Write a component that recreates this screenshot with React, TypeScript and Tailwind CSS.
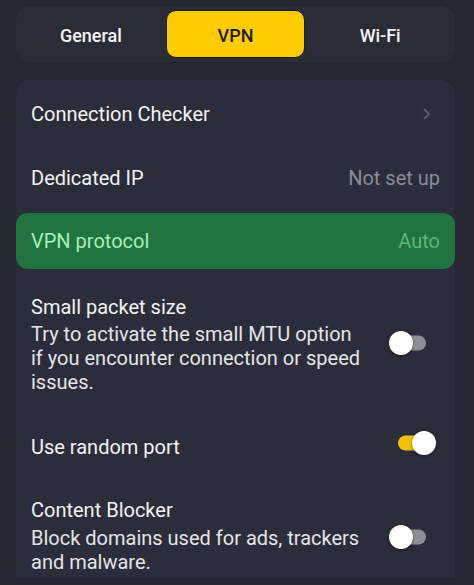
import React, { useState } from 'react';

const Toggle: React.FC<{ on: boolean; onChange: () => void }> = ({ on, onChange }) => (
  <button type="button" onClick={onChange} className="relative h-[26px] w-[46px] shrink-0">
    <span
      className={`absolute top-1/2 left-[8px] h-[15px] w-[29px] -translate-y-1/2 rounded-full ${on ? 'bg-[#f2c200]' : 'bg-[#8e8f96]'}`}
    />
    <span
      className={`absolute top-1/2 h-[24px] w-[24px] -translate-y-1/2 rounded-full bg-white shadow-[0_1px_3px_rgba(0,0,0,0.5)] ${on ? 'left-[22px]' : 'left-0'}`}
    />
  </button>
);

const App: React.FC = () => {
  const [tab, setTab] = useState('VPN');
  const [smallPacket, setSmallPacket] = useState(false);
  const [randomPort, setRandomPort] = useState(true);
  const [blocker, setBlocker] = useState(false);

  const tabs = ['General', 'VPN', 'Wi-Fi'];

  return (
    <div className="h-[585px] w-[474px] overflow-hidden bg-[#252632] pt-[6px] pl-4 pr-[19px] font-['Roboto',sans-serif]">
      {/* Tabs */}
      <div className="flex h-[56px] items-center gap-[6px] rounded-[14px] bg-[#2b2c38] px-[6px]">
        {tabs.map((t) => (
          <button
            key={t}
            type="button"
            onClick={() => setTab(t)}
            className={`flex h-[48px] flex-1 items-center justify-center rounded-[10px] pt-[2px] text-[18px] font-medium ${
              tab === t ? 'border border-[#1a1a1a] bg-[#ffcc00] text-[#1c1c1c]' : 'text-[#f4f4f6]'
            }`}
          >
            {t}
          </button>
        ))}
      </div>

      {/* Settings card */}
      <div className="mt-[18px] h-[498px] rounded-t-[14px] bg-[#2c2d3a] text-[20px]">
        <div className="flex h-[66px] items-center justify-between px-[15px] pt-[1px]">
          <span className="text-[#f2f2f4]">Connection Checker</span>
          <svg width="12" height="16" viewBox="0 0 12 16" className="mr-[7px]">
            <path d="M3 3l5 5-5 5" fill="none" stroke="#5e5f6b" strokeWidth="1.8" />
          </svg>
        </div>
        <div className="flex h-[67px] items-center justify-between px-[15px] pb-[3px]">
          <span className="text-[#f2f2f4]">Dedicated IP</span>
          <span className="text-[#8b8c95]">Not set up</span>
        </div>
        <div className="flex h-[56px] items-center justify-between rounded-[12px] bg-[#217440] px-[15px]">
          <span className="text-[#a6efb8]">VPN protocol</span>
          <span className="text-[#5fb47a]">Auto</span>
        </div>

        <div className="flex items-center justify-between px-[15px] pt-[26px]">
          <div className="w-[330px] leading-[24px]">
            <div className="mb-[3px] text-[#f2f2f4]">Small packet size</div>
            <div className="text-[#e4e4e8]">
              Try to activate the small MTU option if you encounter connection or speed issues.
            </div>
          </div>
          <div className="mt-[4px] mr-[5px]">
            <Toggle on={smallPacket} onChange={() => setSmallPacket(!smallPacket)} />
          </div>
        </div>

        <div className="flex h-[71px] items-center justify-between px-[15px] pt-[37px] pb-[2px]">
          <span className="text-[#f2f2f4]">Use random port</span>
          <div className="mr-[4px]">
            <Toggle on={randomPort} onChange={() => setRandomPort(!randomPort)} />
          </div>
        </div>

        <div className="flex items-center justify-between px-[15px] pt-[33px]">
          <div className="w-[340px] leading-[24px]">
            <div className="mb-[4px] text-[#f2f2f4]">Content Blocker</div>
            <div className="text-[#e4e4e8]">Block domains used for ads, trackers and malware.</div>
          </div>
          <div className="mt-[10px] mr-[5px]">
            <Toggle on={blocker} onChange={() => setBlocker(!blocker)} />
          </div>
        </div>
      </div>
    </div>
  );
};

export default App;
